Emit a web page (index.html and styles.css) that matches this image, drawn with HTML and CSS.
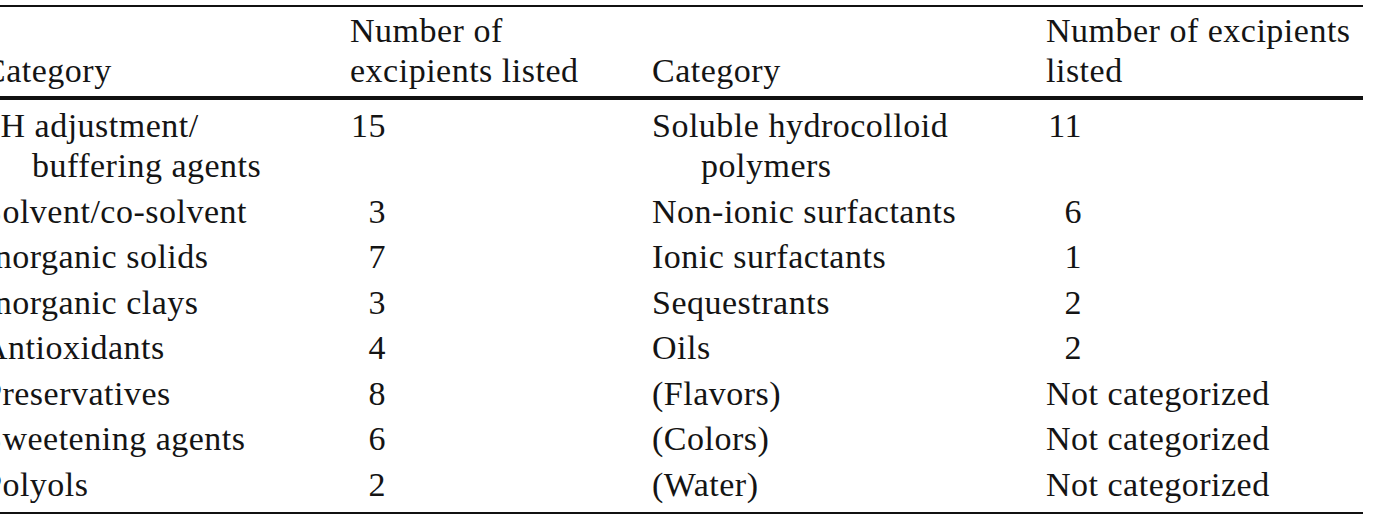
FILE: index.html
```html
<!DOCTYPE html>
<html lang="en">
<head>
<meta charset="utf-8">
<title>Excipient categories</title>
<link rel="stylesheet" href="styles.css">
</head>
<body>
<div class="page">
<table class="tbl">
  <colgroup>
    <col class="c1"><col class="c2"><col class="c3"><col class="c4">
  </colgroup>
  <thead>
    <tr>
      <th>Category</th>
      <th>Number of<br>excipients listed</th>
      <th>Category</th>
      <th>Number of excipients<br>listed</th>
    </tr>
  </thead>
  <tbody>
    <tr class="first">
      <td class="cat">pH adjustment/<br>buffering agents</td>
      <td><span class="num">15</span></td>
      <td class="cat">Soluble hydrocolloid<br>polymers</td>
      <td><span class="num">11</span></td>
    </tr>
    <tr>
      <td class="cat">Solvent/co-solvent</td>
      <td><span class="num">3</span></td>
      <td class="cat">Non-ionic surfactants</td>
      <td><span class="num">6</span></td>
    </tr>
    <tr>
      <td class="cat">Inorganic solids</td>
      <td><span class="num">7</span></td>
      <td class="cat">Ionic surfactants</td>
      <td><span class="num">1</span></td>
    </tr>
    <tr>
      <td class="cat">Inorganic clays</td>
      <td><span class="num">3</span></td>
      <td class="cat">Sequestrants</td>
      <td><span class="num">2</span></td>
    </tr>
    <tr>
      <td class="cat">Antioxidants</td>
      <td><span class="num">4</span></td>
      <td class="cat">Oils</td>
      <td><span class="num">2</span></td>
    </tr>
    <tr>
      <td class="cat">Preservatives</td>
      <td><span class="num">8</span></td>
      <td class="cat">(Flavors)</td>
      <td>Not categorized</td>
    </tr>
    <tr>
      <td class="cat">Sweetening agents</td>
      <td><span class="num">6</span></td>
      <td class="cat">(Colors)</td>
      <td>Not categorized</td>
    </tr>
    <tr class="last">
      <td class="cat">Polyols</td>
      <td><span class="num">2</span></td>
      <td class="cat">(Water)</td>
      <td>Not categorized</td>
    </tr>
  </tbody>
</table>
</div>
</body>
</html>
```
FILE: styles.css
```css
html, body {
  margin: 0;
  padding: 0;
  background: #ffffff;
}

body {
  overflow: hidden;
}

.page {
  padding-top: 5px;
}

.tbl {
  margin-left: -17px;
  width: 1380px;
  table-layout: fixed;
  border-collapse: separate;
  border-spacing: 0;
  font-family: "Liberation Serif", "Times New Roman", serif;
  font-size: 34px;
  letter-spacing: 0.5px;
  line-height: 40px;
  color: #141414;
}

.c1 { width: 367px; }
.c2 { width: 302px; }
.c3 { width: 394px; }
.c4 { width: 317px; }

.tbl th {
  font-weight: normal;
  text-align: left;
  vertical-align: bottom;
  padding: 4px 0 5px 0;
  border-top: 2px solid #111;
  border-bottom: 4px solid #111;
  white-space: nowrap;
}

.tbl td {
  text-align: left;
  vertical-align: top;
  padding: 2.75px 0;
  white-space: nowrap;
}

.tbl td.cat {
  padding-left: 49px;
  text-indent: -49px;
}

.tbl tr.first td {
  padding-top: 6px;
}

.tbl tr.last td {
  padding-bottom: 7.5px;
  border-bottom: 2px solid #111;
}

.num {
  display: inline-block;
  width: 36px;
  text-align: right;
}
```
